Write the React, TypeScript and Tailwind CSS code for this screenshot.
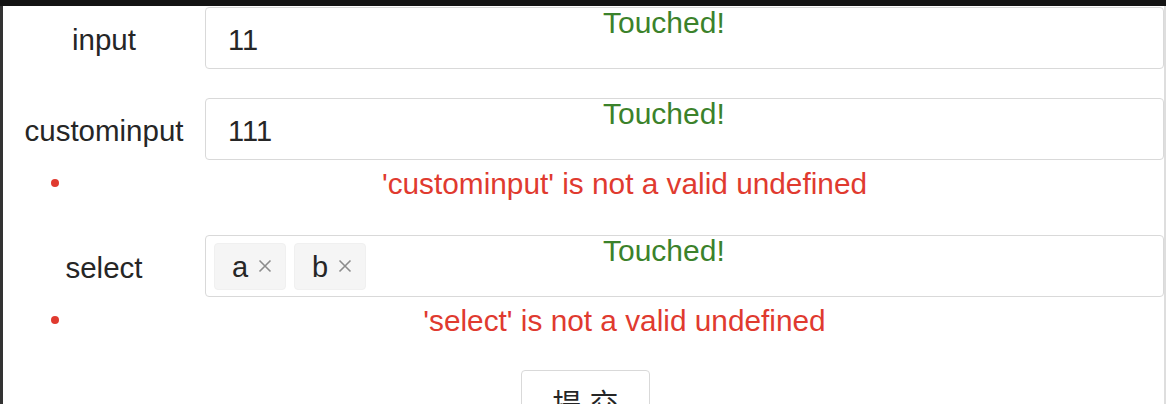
const font = { fontFamily: '"Liberation Sans", "Noto Sans CJK SC", sans-serif' };

function Touched() {
  return (
    <span className="pointer-events-none absolute left-[398px] top-[0px] text-[30px] leading-[32px] text-[#3b822b]">
      Touched!
    </span>
  );
}

function ErrorLine({ text }: { text: string }) {
  return (
    <div className="flex h-[46px] items-center">
      <div className="w-[82px] pl-[48px]">
        <div className="h-[8px] w-[8px] rounded-full bg-[#e03a2f]" />
      </div>
      <div className="flex-1 pt-[2px] text-center text-[29.8px] leading-[44px] text-[#e03a2f]">{text}</div>
    </div>
  );
}

function Tag({ label }: { label: string }) {
  return (
    <div className="flex h-[47px] w-[72px] items-center rounded-[4px] border border-[#f0f0f0] bg-[#f5f5f5] pl-[17px]">
      <span className="pt-[2px] text-[29px] leading-none text-[#262626]">{label}</span>
      <svg className="ml-[10px]" width="14" height="14" viewBox="0 0 14 14" fill="none">
        <path d="M1.5 1.5 L12.5 12.5 M12.5 1.5 L1.5 12.5" stroke="#8c8c8c" strokeWidth="1.6" />
      </svg>
    </div>
  );
}

export default function App() {
  return (
    <div className="flex h-[404px] w-[1166px] flex-col overflow-hidden bg-white" style={font}>
      <div className="h-[6px] shrink-0 bg-[#141414]" />
      <div className="flex min-h-0 flex-1">
        <div className="w-[3px] shrink-0 bg-[#333333]" />
        <div className="min-w-0 flex-1 pt-[1px]">
          {/* input */}
          <div className="flex">
            <div className="flex w-[202px] shrink-0 items-center justify-center pt-[5px] text-[29.5px] text-[#262626]">input</div>
            <div className="relative flex-1">
              <div className="flex h-[62px] items-center rounded-[4px] border border-[#d9d9d9] px-[22px] pt-[5px] text-[29px] text-[#262626]">
                11
              </div>
              <Touched />
            </div>
          </div>

          {/* custominput */}
          <div className="mt-[29px] flex">
            <div className="flex w-[202px] shrink-0 items-center justify-center pt-[5px] text-[29.5px] text-[#262626]">custominput</div>
            <div className="relative flex-1">
              <div className="flex h-[62px] items-center rounded-[4px] border border-[#d9d9d9] px-[22px] pt-[5px] text-[29px] text-[#262626]">
                111
              </div>
              <Touched />
            </div>
          </div>
          <ErrorLine text="'custominput' is not a valid undefined" />

          {/* select */}
          <div className="mt-[29px] flex">
            <div className="flex w-[202px] shrink-0 items-center justify-center pt-[4px] text-[29.5px] text-[#262626]">select</div>
            <div className="relative flex-1">
              <div className="flex h-[62px] items-center gap-[8px] rounded-[4px] border border-[#d9d9d9] px-[8px]">
                <Tag label="a" />
                <Tag label="b" />
              </div>
              <Touched />
            </div>
          </div>
          <ErrorLine text="'select' is not a valid undefined" />

          <div className="mt-[27px] flex justify-center pl-[4px]">
            <button className="h-[64px] w-[129px] rounded-[4px] border border-[#d9d9d9] bg-white pt-[6px] text-[29px] leading-[44px] text-[#262626]">
              提 交
            </button>
          </div>
        </div>
        <div className="w-[2px] shrink-0 bg-[#dedede]" />
      </div>
    </div>
  );
}
